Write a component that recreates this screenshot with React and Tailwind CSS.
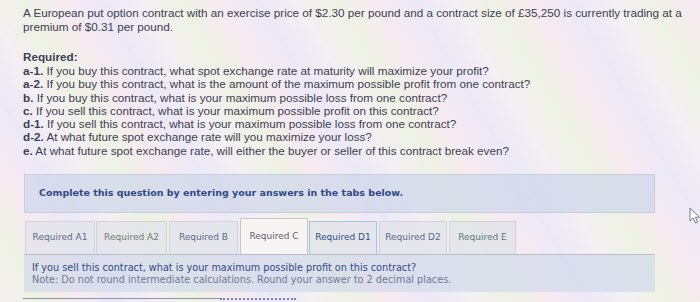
const items = [
  ["a-1.", "If you buy this contract, what spot exchange rate at maturity will maximize your profit?"],
  ["a-2.", "If you buy this contract, what is the amount of the maximum possible profit from one contract?"],
  ["b.", "If you buy this contract, what is your maximum possible loss from one contract?"],
  ["c.", "If you sell this contract, what is your maximum possible profit on this contract?"],
  ["d-1.", "If you sell this contract, what is your maximum possible loss from one contract?"],
  ["d-2.", "At what future spot exchange rate will you maximize your loss?"],
  ["e.", "At what future spot exchange rate, will either the buyer or seller of this contract break even?"],
];

const tabs = [
  { label: "Required A1", cls: "w-[70px] h-[33px] mr-[1px] bg-[#e2e4ea]/80 border-[#cfd2d6] text-[#5a6a8a]" },
  { label: "Required A2", cls: "w-[71px] h-[33px] mr-[2px] bg-[#e2e4ea]/80 border-[#cfd2d6] text-[#6f7a6a]" },
  { label: "Required B", cls: "w-[69px] h-[33px] mr-[2px] bg-[#e2e4ea]/80 border-[#cfd2d6] text-[#5a6a8a]" },
  { label: "Required C", cls: "w-[68px] h-[36px] mr-[1px] bg-[#f7f4f3] border-[#c9c6c4] text-[#5e6270]" },
  { label: "Required D1", cls: "w-[68px] h-[33px] mr-[2px] bg-[#e2e4ea]/80 border-[#9fc9de] text-[#2e4d8a]" },
  { label: "Required D2", cls: "w-[68px] h-[33px] mr-[2px] bg-[#e2e4ea]/80 border-[#cfd2d6] text-[#5a6a8a]" },
  { label: "Required E", cls: "w-[67px] h-[33px] bg-[#e2e4ea]/80 border-[#cfd2d6] text-[#5a7a78]" },
];

export default function App() {
  return (
    <div className="relative w-[700px] h-[302px] overflow-hidden bg-[repeating-linear-gradient(60deg,#f4eff3_0px,#eef2e4_34px,#f6eaf0_68px,#ece9f7_102px,#f4eff3_136px)]">
      <div className="pl-[23px] pr-[8px] pt-[6px] text-[#3c3f52] text-[11.7px] leading-[14px] font-['Liberation_Sans',Arial,sans-serif]">
        <p>
          A European put option contract with an exercise price of $2.30 per pound and a contract size of £35,250 is currently trading at a
          premium of $0.31 per pound.
        </p>
        <p className="mt-[16px] font-bold">Required:</p>
        <div className="leading-[13.3px]">
          {items.map(([label, text]) => (
            <p key={label}>
              <span className="font-bold">{label}</span> {text}
            </p>
          ))}
        </div>
      </div>

      <div className="ml-[24px] mt-[17px] w-[631px] h-[39px] flex items-center pl-[14px] bg-[#cdd5ea]/70 border border-[#c6cede] font-['DejaVu_Sans',Verdana,sans-serif] font-bold text-[9.5px] text-[#2f4a86]">
        Complete this question by entering your answers in the tabs below.
      </div>

      <div className="ml-[25px] mt-[5px] w-[630px] flex items-end font-['DejaVu_Sans',Verdana,sans-serif] text-[9px]">
        {tabs.map((tab) => (
          <div key={tab.label} className={"flex items-center justify-center border border-b-0 " + tab.cls}>
            {tab.label}
          </div>
        ))}
      </div>

      <div className="ml-[24px] w-[631px] h-[38px] flex flex-col justify-center pl-[8px] bg-[#d2d9ea]/70 border-t border-[#b9bec6] font-['DejaVu_Sans',Verdana,sans-serif] text-[9.7px] leading-[12px]">
        <p className="text-[#2f4a86]">If you sell this contract, what is your maximum possible profit on this contract?</p>
        <p className="text-[#6b7a98]">Note: Do not round intermediate calculations. Round your answer to 2 decimal places.</p>
      </div>

      <div className="ml-[23px] mt-[6px] w-[273px] flex">
        <div className="w-[197px] h-[1px] bg-[#8d96a8]" />
        <div className="w-[76px] h-[2px] border-t-2 border-dotted border-[#6f85c0]" />
      </div>

      <svg className="absolute left-[689px] top-[207px]" width="12" height="17" viewBox="0 0 12 17">
        <path d="M1 1 L1 14 L4.2 11 L6.6 16 L8.6 15 L6.3 10.2 L10.6 10.2 Z" fill="#ffffff" stroke="#7a7a80" strokeWidth="1" strokeLinejoin="round" />
      </svg>
    </div>
  );
}
